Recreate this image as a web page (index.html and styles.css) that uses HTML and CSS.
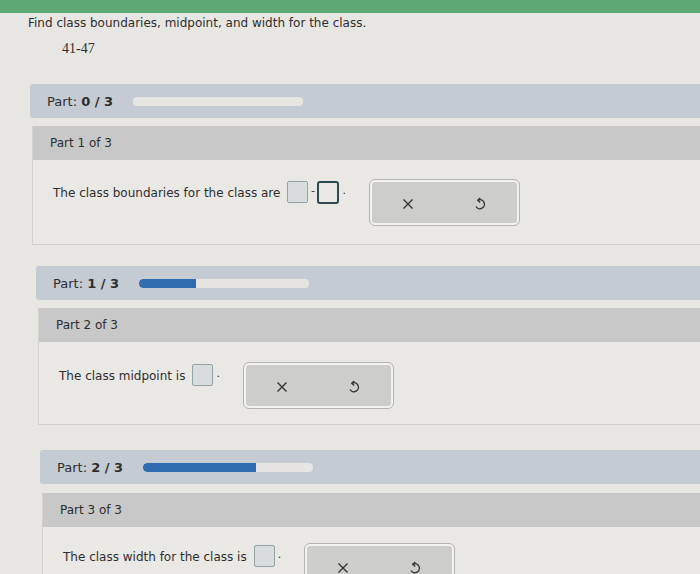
FILE: index.html
```html
<!DOCTYPE html>
<html>
<head>
<meta charset="utf-8">
<link rel="stylesheet" href="styles.css">
</head>
<body>
<div class="topbar"></div>
<div class="page">
  <p class="title">Find class boundaries, midpoint, and width for the class.</p>
  <p class="value">41-47</p>

  <section class="part part-1">
    <div class="progress">
      <span class="plabel">Part: <b>0 / 3</b></span>
      <div class="track"><div class="fill" style="width:0%"></div></div>
    </div>
    <div class="card">
      <div class="card-head">Part 1 of 3</div>
      <div class="card-body">
        <span class="q">The class boundaries for the class are</span>
        <span class="box"></span><span class="dash">-</span><span class="box focus"></span><span class="dot">.</span>
        <div class="tools">
          <span class="tool"><svg width="14" height="14" viewBox="0 0 14 14"><path d="M2.5 2.5 L11.5 11.5 M11.5 2.5 L2.5 11.5" stroke="#333" stroke-width="1.4" fill="none"/></svg></span>
          <span class="tool"><svg width="14" height="14" viewBox="0 0 14 14"><path d="M5 3.2 A4.5 4.5 0 1 1 3 9.5" stroke="#333" stroke-width="1.4" fill="none"/><path d="M7.2 1 L4.8 3.2 L7.2 5.4" stroke="#333" stroke-width="1.4" fill="none"/></svg></span>
        </div>
      </div>
    </div>
  </section>

  <section class="part part-2">
    <div class="progress">
      <span class="plabel">Part: <b>1 / 3</b></span>
      <div class="track"><div class="fill" style="width:33.3%"></div></div>
    </div>
    <div class="card">
      <div class="card-head">Part 2 of 3</div>
      <div class="card-body mid">
        <span class="q">The class midpoint is</span>
        <span class="box"></span><span class="dot">.</span>
        <div class="tools">
          <span class="tool"><svg width="14" height="14" viewBox="0 0 14 14"><path d="M2.5 2.5 L11.5 11.5 M11.5 2.5 L2.5 11.5" stroke="#333" stroke-width="1.4" fill="none"/></svg></span>
          <span class="tool"><svg width="14" height="14" viewBox="0 0 14 14"><path d="M5 3.2 A4.5 4.5 0 1 1 3 9.5" stroke="#333" stroke-width="1.4" fill="none"/><path d="M7.2 1 L4.8 3.2 L7.2 5.4" stroke="#333" stroke-width="1.4" fill="none"/></svg></span>
        </div>
      </div>
    </div>
  </section>

  <section class="part part-3">
    <div class="progress">
      <span class="plabel">Part: <b>2 / 3</b></span>
      <div class="track"><div class="fill" style="width:66.7%"></div></div>
    </div>
    <div class="card">
      <div class="card-head">Part 3 of 3</div>
      <div class="card-body tight">
        <span class="q">The class width for the class is</span>
        <span class="box"></span><span class="dot">.</span>
        <div class="tools">
          <span class="tool"><svg width="14" height="14" viewBox="0 0 14 14"><path d="M2.5 2.5 L11.5 11.5 M11.5 2.5 L2.5 11.5" stroke="#333" stroke-width="1.4" fill="none"/></svg></span>
          <span class="tool"><svg width="14" height="14" viewBox="0 0 14 14"><path d="M5 3.2 A4.5 4.5 0 1 1 3 9.5" stroke="#333" stroke-width="1.4" fill="none"/><path d="M7.2 1 L4.8 3.2 L7.2 5.4" stroke="#333" stroke-width="1.4" fill="none"/></svg></span>
        </div>
      </div>
    </div>
  </section>
</div>
</body>
</html>
```
FILE: styles.css
```css
html, body {
  margin: 0;
  padding: 0;
  background: #e8e6e2;
  height: 574px;
  overflow: hidden;
}
body {
  font-family: "DejaVu Sans", Verdana, sans-serif;
  color: #2e2e2e;
}
.topbar {
  height: 13px;
  background: #5ea873;
}
.title {
  margin: 0;
  padding: 3px 0 0 28px;
  font-size: 12px;
  line-height: 14px;
}
.value {
  margin: 0;
  padding: 10px 0 0 62px;
  font-family: "Liberation Serif", "Times New Roman", serif;
  font-size: 14px;
  line-height: 18px;
}
.part {
  display: flex;
  flex-direction: column;
}
.part-1 { margin: 26px 0 0 30px; }
.part-2 { margin: 21px 0 0 36px; }
.part-3 { margin: 25px 0 0 40px; }
.progress {
  height: 34px;
  background: #c4cbd3;
  border-radius: 3px 0 0 3px;
  display: flex;
  align-items: center;
  padding-left: 17px;
  font-size: 13px;
}
.plabel {
  width: 86px;
  flex: none;
}
.plabel b {
  font-weight: bold;
}
.track {
  width: 170px;
  height: 9px;
  background: #e6e5e2;
  border-radius: 4px;
  overflow: hidden;
}
.fill {
  height: 100%;
  background: #2f6db0;
  border-radius: 4px 0 0 4px;
}
.card {
  margin-top: 8px;
  margin-left: 2px;
  border-left: 1px solid #d2d1ce;
  border-bottom: 1px solid #cfcecb;
}
.part-3 .card {
  margin-top: 9px;
}
.card-head {
  height: 34px;
  background: #c7c8c7;
  display: flex;
  align-items: center;
  padding-left: 17px;
  font-size: 12px;
}
.card-body {
  background: #eae8e4;
  display: flex;
  align-items: flex-start;
  padding: 20px 0 19px 20px;
  font-size: 12px;
  line-height: 22px;
}
.card-body.mid {
  padding-top: 21px;
  padding-bottom: 16px;
}
.card-body.tight {
  padding-top: 17px;
}
.q {
  margin-right: 7px;
  margin-top: 2px;
}
.box {
  width: 19px;
  height: 20px;
  margin-top: 1px;
  background: #d9dcdc;
  border: 1px solid #93a2a5;
  border-radius: 2px;
  flex: none;
}
.box.focus {
  width: 18px;
  height: 19px;
  background: #ebe9e6;
  border: 2px solid #2d4a50;
  border-radius: 3px;
}
.dash {
  width: 9px;
  text-align: center;
  font-size: 11px;
}
.dot {
  margin-left: 3px;
  font-size: 11px;
}
.tools {
  margin-left: 24px;
  width: 145px;
  height: 41px;
  background: #cdcdcc;
  border: 2px solid #f3f2f0;
  outline: 1px solid #b4b4b3;
  border-radius: 5px;
  display: flex;
  align-items: center;
}
.tool {
  width: 72px;
  display: flex;
  justify-content: center;
  padding-top: 3px;
}
```
